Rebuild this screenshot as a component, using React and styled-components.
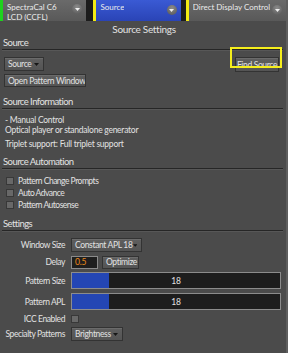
import styled, { createGlobalStyle } from 'styled-components'

const Global = createGlobalStyle`
  html, body { margin: 0; padding: 0; background: #4b4b4b; }
  body { font-family: Lato, "Liberation Sans", sans-serif; color: #e2e2e2; letter-spacing: -0.25px; }
  * { box-sizing: border-box; }
`

const Page = styled.div`
  width: 288px;
  height: 353px;
  background: #4b4b4b;
  overflow: hidden;
  position: relative;
  border-right: 2px solid #5e5e5e;
`

const TabBar = styled.div`
  display: flex;
  height: 21px;
  background: #1c1c1c;
`

const Tab = styled.div`
  width: ${p => p.w}px;
  margin-left: ${p => p.gap}px;
  display: flex;
  align-items: flex-start;
  justify-content: space-between;
  border-left: 3px solid ${p => p.stripe};
  background: ${p => p.active ? 'linear-gradient(#3a5ad4, #2a44b6)' : 'linear-gradient(#6a6a6a, #595959)'};
  padding: 1px 4px 0 4px;
  font-size: 8px;
  line-height: 10px;
  letter-spacing: 0;
  color: #ececec;
`

const TabLabel = styled.div`
  white-space: nowrap;
  overflow: hidden;
  padding-top: 1px;
`

const TabArrow = styled.div`
  flex: none;
  width: 10px;
  height: 10px;
  border-radius: 50%;
  margin-top: ${p => p.top}px;
  background: radial-gradient(circle at 50% 30%, #8c8c8c, #545454);
  display: flex;
  align-items: center;
  justify-content: center;
`

const Title = styled.div`
  text-align: center;
  font-size: 10px;
  line-height: 16px;
  height: 16px;
  letter-spacing: -0.3px;
  padding-left: 2px;
`

const SectionHead = styled.div`
  font-size: 9.5px;
  line-height: 12px;
  height: 13px;
  letter-spacing: -0.55px;
  padding-left: 1px;
  margin: ${p => p.mt || 0}px 3px 0 2px;
  border-bottom: 1px solid #262626;
  box-shadow: 0 1px 0 #575757;
`

const Body = styled.div`
  position: relative;
  padding: ${p => p.pad};
`

const Btn = styled.div`
  display: flex;
  align-items: center;
  justify-content: space-between;
  width: ${p => p.w}px;
  height: ${p => p.h || 14}px;
  padding: 0 4px 0 3px;
  font-size: 8.5px;
  letter-spacing: -0.35px;
  background: linear-gradient(#5f5f5f, #545454);
  border: 1px solid #333;
  box-shadow: inset 0 1px 0 #6b6b6b;
  white-space: nowrap;
  overflow: hidden;
`

const Stack = styled.div`
  display: flex;
  flex-direction: column;
  gap: 3px;
`

const Caret = ({ color = '#161616' }) => (
  <svg width="5" height="3" viewBox="0 0 5 3"><path d="M0 0h5L2.5 3z" fill={color} /></svg>
)

const Highlight = styled.div`
  position: absolute;
  left: 230px;
  top: -3px;
  width: 52px;
  height: 21px;
  border: 2px solid #f5ee1c;
  z-index: 2;
`

const FindBtn = styled(Btn)`
  position: absolute;
  left: 235px;
  top: 7px;
  width: 44px;
  height: 15px;
  justify-content: center;
  padding: 0;
`

const InfoText = styled.div`
  font-size: 8.5px;
  line-height: 10px;
  padding-left: 5px;
  margin-bottom: ${p => p.mb || 0}px;
`

const CheckRow = styled.div`
  display: flex;
  align-items: center;
  gap: 4px;
  height: 12px;
  font-size: 8.5px;
  letter-spacing: -0.5px;
  padding-left: 6px;
`

const Box = styled.div`
  width: 8px;
  height: 8px;
  background: #686868;
  border: 1px solid #383838;
`

const FormGrid = styled.div`
  display: grid;
  grid-template-columns: 65px 210px;
  grid-template-rows: 14px 12px 17px 17px 9px 14px;
  column-gap: 6px;
  row-gap: 4px;
  align-items: center;
  padding-top: 7px;
`

const Label = styled.div`
  text-align: right;
  font-size: 8.5px;
  letter-spacing: -0.4px;
  white-space: nowrap;
`

const Inline = styled.div`
  display: flex;
  align-items: center;
  gap: 4px;
  height: 100%;
`

const DelayInput = styled.div`
  width: 27px;
  height: 13px;
  background: #1e1e1e;
  border: 1px solid #8a8a8a;
  color: #ee8a1a;
  font-size: 8.5px;
  padding-left: 3px;
  line-height: 11px;
`

const Slider = styled.div`
  position: relative;
  height: 17px;
  background: #1d1d1d;
  border: 1px solid #8c8c8c;
  font-size: 8.5px;
  display: flex;
  align-items: center;
  justify-content: center;
`

const Fill = styled.div`
  position: absolute;
  left: 0;
  top: 0;
  bottom: 0;
  background: #2446b4;
`

const SliderValue = styled.span`
  position: relative;
`

function App() {
  const patternSize = 18
  const patternApl = 18
  return (
    <Page>
      <Global />
      <TabBar>
        <Tab w={87} gap={0} stripe="#1ed21e">
          <TabLabel>SpectraCal C6<br />LCD (CCFL)</TabLabel>
          <TabArrow top={3}><Caret color="#f0f0f0" /></TabArrow>
        </Tab>
        <Tab w={88} gap={7} stripe="#f2ea14" active>
          <TabLabel>Source</TabLabel>
          <TabArrow top={4}><Caret color="#f0f0f0" /></TabArrow>
        </Tab>
        <Tab w={101} gap={5} stripe="#f2ea14">
          <TabLabel>Direct Display Control</TabLabel>
          <TabArrow top={4}><Caret color="#f0f0f0" /></TabArrow>
        </Tab>
      </TabBar>

      <Title>Source Settings</Title>
      <SectionHead>Source</SectionHead>
      <Body pad="7px 0 0 4px">
        <Highlight />
        <FindBtn>Find Source</FindBtn>
        <Stack>
          <Btn w={40}>Source <Caret /></Btn>
          <Btn w={82} h={13}>Open Pattern Window</Btn>
        </Stack>
      </Body>

      <SectionHead mt={9}>Source Information</SectionHead>
      <Body pad="6px 0 0 0">
        <InfoText>- Manual Control</InfoText>
        <InfoText mb={4}>Optical player or standalone generator</InfoText>
        <InfoText>Triplet support: Full triplet support</InfoText>
      </Body>

      <SectionHead mt={7}>Source Automation</SectionHead>
      <Body pad="6px 0 0 0">
        <CheckRow><Box />Pattern Change Prompts</CheckRow>
        <CheckRow><Box />Auto Advance</CheckRow>
        <CheckRow><Box />Pattern Autosense</CheckRow>
      </Body>

      <SectionHead mt={7}>Settings</SectionHead>
      <FormGrid>
        <Label>Window Size</Label>
        <Btn w={71}>Constant APL 18 <Caret /></Btn>
        <Label>Delay</Label>
        <Inline>
          <DelayInput>0.5</DelayInput>
          <Btn w={37} h={13}>Optimize</Btn>
        </Inline>
        <Label>Pattern Size</Label>
        <Slider><Fill style={{ width: `${patternSize}%` }} /><SliderValue>{patternSize}</SliderValue></Slider>
        <Label>Pattern APL</Label>
        <Slider><Fill style={{ width: `${patternApl}%` }} /><SliderValue>{patternApl}</SliderValue></Slider>
        <Label>ICC Enabled</Label>
        <Box />
        <Label>Specialty Patterns</Label>
        <Btn w={52}>Brightness <Caret /></Btn>
      </FormGrid>
    </Page>
  )
}

export default App
